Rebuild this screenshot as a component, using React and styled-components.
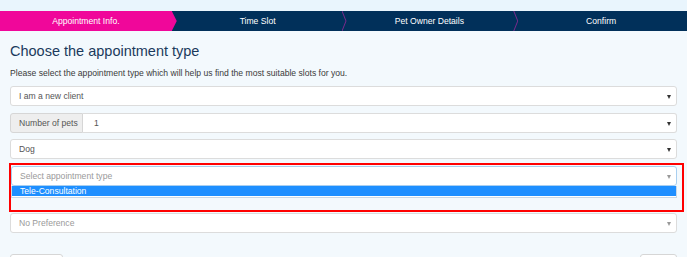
import styled, { createGlobalStyle } from "styled-components"

const GlobalStyle = createGlobalStyle`
  body {
    margin: 0;
    background: #f3f9fd;
    font-family: "Liberation Sans", Arial, sans-serif;
  }
`

const Page = styled.div`
  background: #f3f9fd;
`

const Top = styled.div`
  background: #e9f5fd;
  padding-top: 11px;
`

const Stepper = styled.div`
  display: grid;
  grid-template-columns: repeat(4, 1fr);
  height: 20px;
  background: #01305a;
`

const Step = styled.div`
  position: relative;
  color: #fff;
  font-size: 8.6px;
  line-height: 20px;
  text-align: center;
  background: ${p => (p.$active ? "#f0079a" : "transparent")};

  &::after {
    content: "";
    display: ${p => (p.$last ? "none" : "block")};
    position: absolute;
    top: 0;
    right: ${p => (p.$active ? "-5px" : "-3px")};
    width: 5px;
    height: 20px;
    z-index: 1;
    background: ${p => (p.$active ? "#f0079a" : "#7b2a8c")};
    clip-path: ${p =>
      p.$active
        ? "polygon(0 0, 100% 50%, 0 100%)"
        : "polygon(0 0, 1px 0, 100% 50%, 1px 100%, 0 100%, calc(100% - 1px) 50%)"};
  }
`

const Content = styled.div`
  padding: 12px 10px 0;
`

const Title = styled.h2`
  margin: 0;
  font-size: 14.5px;
  font-weight: normal;
  line-height: 17px;
  color: #1b3a5c;
`

const Lead = styled.p`
  margin: 7px 0 7px;
  font-size: 8.6px;
  line-height: 12px;
  color: #3a3a3a;
`

const Field = styled.div`
  position: relative;
  display: flex;
  align-items: center;
  height: 20px;
  box-sizing: border-box;
  background: #fff;
  border: 1px solid ${p => (p.$focus ? "#a9cff0" : "#dcdcdc")};
  border-radius: 3px;
  padding-left: 8px;
  font-size: 8.6px;
  color: ${p => (p.$muted ? "#9a9a9a" : "#555")};
  margin-bottom: ${p => p.$gap ?? 6.5}px;

  &::after {
    content: "";
    position: absolute;
    right: 5px;
    top: 8px;
    border-left: 2.5px solid transparent;
    border-right: 2.5px solid transparent;
    border-top: 4px solid ${p => (p.$muted ? "#999" : "#333")};
  }
`

const Group = styled.div`
  display: flex;
  height: 20px;
  margin-bottom: 6.5px;
`

const Addon = styled.div`
  display: flex;
  align-items: center;
  box-sizing: border-box;
  width: 73px;
  padding-left: 8px;
  background: #eee;
  border: 1px solid #d6d6d6;
  border-radius: 3px 0 0 3px;
  font-size: 8.6px;
  color: #555;
`

const GroupField = styled(Field)`
  flex: 1;
  margin: 0;
  border-left: none;
  border-radius: 0 3px 3px 0;
  padding-left: 11px;
`

const Highlight = styled.div`
  border: 2px solid #f00;
  margin: 0 -7px 1px -1px;
  padding: 1px 5px 12px 0;
`

const Dropdown = styled.div`
  border: 1px solid #c9d8e6;
  border-top: none;
  background: #fff;
  padding-bottom: 1px;
`

const Option = styled.div`
  height: 10px;
  line-height: 10px;
  background: #1e8fff;
  color: #fff;
  font-size: 8.6px;
  padding-left: 8px;
`

const Actions = styled.div`
  display: flex;
  justify-content: space-between;
  margin-top: 21px;
`

const Btn = styled.div`
  width: ${p => p.$w}px;
  height: 20px;
  box-sizing: border-box;
  background: #fff;
  border: 1px solid #d6d6d6;
  border-radius: 3px;
`

const steps = ["Appointment Info.", "Time Slot", "Pet Owner Details", "Confirm"]

const App = () => {
  return (
    <Page>
      <GlobalStyle />
      <Top>
        <Stepper>
          {steps.map((s, i) => (
            <Step key={s} $active={i === 0} $last={i === steps.length - 1}>
              {s}
            </Step>
          ))}
        </Stepper>
      </Top>
      <Content>
        <Title>Choose the appointment type</Title>
        <Lead>
          Please select the appointment type which will help us find the most
          suitable slots for you.
        </Lead>
        <Field>I am a new client</Field>
        <Group>
          <Addon>Number of pets</Addon>
          <GroupField>1</GroupField>
        </Group>
        <Field $gap={3.5}>Dog</Field>
        <Highlight>
          <Field $focus $muted $gap={0}>
            Select appointment type
          </Field>
          <Dropdown>
            <Option>Tele-Consultation</Option>
          </Dropdown>
        </Highlight>
        <Field $muted>No Preference</Field>
        <Actions>
          <Btn $w={53} />
          <Btn $w={37} />
        </Actions>
      </Content>
    </Page>
  )
}

export default App
